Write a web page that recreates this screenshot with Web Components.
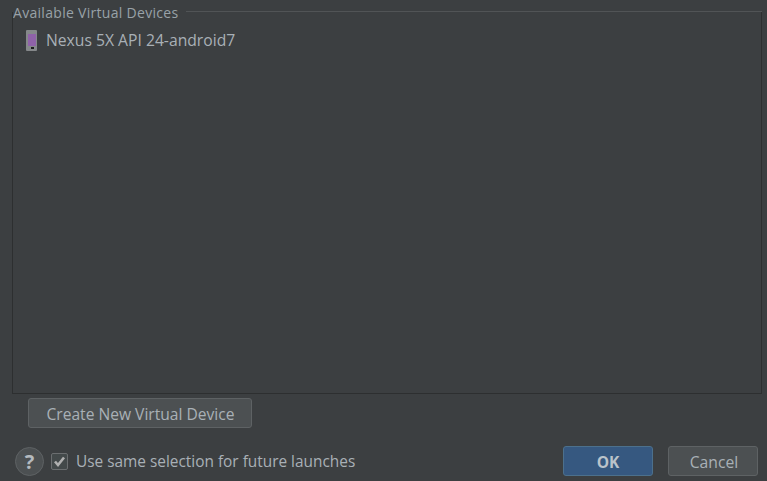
<!DOCTYPE html>
<html>
<head>
<meta charset="utf-8">
<title>Select Deployment Target</title>
<style>
  html, body { margin: 0; height: 100%; background: #3c3f41; overflow: hidden; }
  body { font-family: "Open Sans", "Noto Sans", sans-serif; font-size: 15px; color: #a9b0b6; }
</style>
</head>
<body>
<deploy-dialog>
  <device-group slot="list" title="Available Virtual Devices">
    <device-row>Nexus 5X API 24-android7</device-row>
  </device-group>
  <ide-button slot="create" wide>Create New Virtual Device</ide-button>
  <help-button slot="help"></help-button>
  <ide-checkbox slot="check" checked>Use same selection for future launches</ide-checkbox>
  <ide-button slot="actions" primary>OK</ide-button>
  <ide-button slot="actions">Cancel</ide-button>
</deploy-dialog>

<script>
// small helper so each element just declares its shadow html
function shadow(el, html) {
  el.attachShadow({ mode: 'open' }).innerHTML = html;
}

class DeployDialog extends HTMLElement {
  constructor() {
    super();
    shadow(this, `
      <style>
        :host { display: flex; flex-direction: column; width: 767px; height: 481px; box-sizing: border-box; padding: 0 5px 5px 12px; }
        .list { display: flex; flex: none; height: 394px; }
        ::slotted([slot=list]) { flex: 1; }
        .create { display: flex; padding: 4px 0 0 16px; height: 30px; }
        .bottom { display: flex; align-items: center; margin: 18px 4px 0 3px; height: 30px; }
        .actions { display: flex; gap: 15px; margin-left: auto; }
      </style>
      <div class="list"><slot name="list"></slot></div>
      <div class="create"><slot name="create"></slot></div>
      <div class="bottom">
        <slot name="help"></slot>
        <slot name="check"></slot>
        <div class="actions"><slot name="actions"></slot></div>
      </div>
    `);
  }
}

class DeviceGroup extends HTMLElement {
  constructor() {
    super();
    shadow(this, `
      <style>
        :host { display: flex; flex-direction: column; box-sizing: border-box; }
        .head { display: flex; align-items: center; height: 24px; margin-bottom: -12px; gap: 7px; color: #99a2a8; font-size: 14px; letter-spacing: .3px; }
        .head span { padding-left: 1px; white-space: nowrap; }
        .head i { flex: 1; height: 1px; background: #515456; position: relative; top: -1px; }
        .body { flex: 1; border: 1px solid #2d2f30; border-top: 0; padding: 17px 0 0 11px; }
      </style>
      <div class="head"><span></span><i></i></div>
      <div class="body"><slot></slot></div>
    `);
    this.shadowRoot.querySelector('span').textContent = this.getAttribute('title');
    this.removeAttribute('title');
  }
}

class DeviceRow extends HTMLElement {
  constructor() {
    super();
    shadow(this, `
      <style>
        :host { display: flex; align-items: center; gap: 7px; height: 22px; color: #a9b0b6; font-size: 15.7px; white-space: nowrap; }
        svg { display: block; flex: none; }
      </style>
      <svg width="15" height="21" viewBox="0 0 15 21">
        <rect x="2" y="0" width="11" height="21" rx="1" fill="#85888a"/>
        <rect x="4" y="4" width="8" height="12" fill="#8f62a8"/>
        <rect x="7" y="17" width="3" height="2" fill="#1d1d1d"/>
      </svg>
      <span><slot></slot></span>
    `);
  }
}

class IdeButton extends HTMLElement {
  constructor() {
    super();
    shadow(this, `
      <style>
        :host { display: flex; align-items: center; justify-content: center; box-sizing: border-box; width: 90px; height: 30px; padding: 1px 0 0 2px; border: 1px solid #5e6264; border-radius: 3px; background: #4c5052; color: #a9b0b6; font-size: 15.7px; white-space: nowrap; }
        :host([wide]) { width: 224px; padding-left: 1px; font-size: 15.6px; }
        :host([primary]) { background: #365880; border-color: #4c708c; color: #bbc3ca; font-weight: 700; font-size: 15.5px; padding-left: 0; }
      </style>
      <slot></slot>
    `);
  }
}

class HelpButton extends HTMLElement {
  constructor() {
    super();
    shadow(this, `
      <style>
        :host { display: flex; align-items: center; justify-content: center; box-sizing: border-box; width: 29px; height: 29px; border: 1px solid #5e6264; border-radius: 50%; background: #4c5052; color: #b4babf; font-size: 20px; font-weight: 700; flex: none; }
      </style>
      ?
    `);
  }
}

class IdeCheckbox extends HTMLElement {
  constructor() {
    super();
    shadow(this, `
      <style>
        :host { display: flex; align-items: center; gap: 8px; margin-left: 7px; font-size: 15.4px; white-space: nowrap; }
        .box { display: flex; align-items: center; justify-content: center; box-sizing: border-box; width: 17px; height: 17px; border: 1px solid #6b6e70; border-radius: 2px; background: #43494a; }
        svg { display: block; }
      </style>
      <div class="box">
        <svg width="13" height="13" viewBox="0 0 13 13"><path d="M2 6.5 L5 10 L11 2.5" fill="none" stroke="#b0b0b0" stroke-width="2.6"/></svg>
      </div>
      <span><slot></slot></span>
    `);
  }
}

customElements.define('deploy-dialog', DeployDialog);
customElements.define('device-group', DeviceGroup);
customElements.define('device-row', DeviceRow);
customElements.define('ide-button', IdeButton);
customElements.define('help-button', HelpButton);
customElements.define('ide-checkbox', IdeCheckbox);
</script>
</body>
</html>
